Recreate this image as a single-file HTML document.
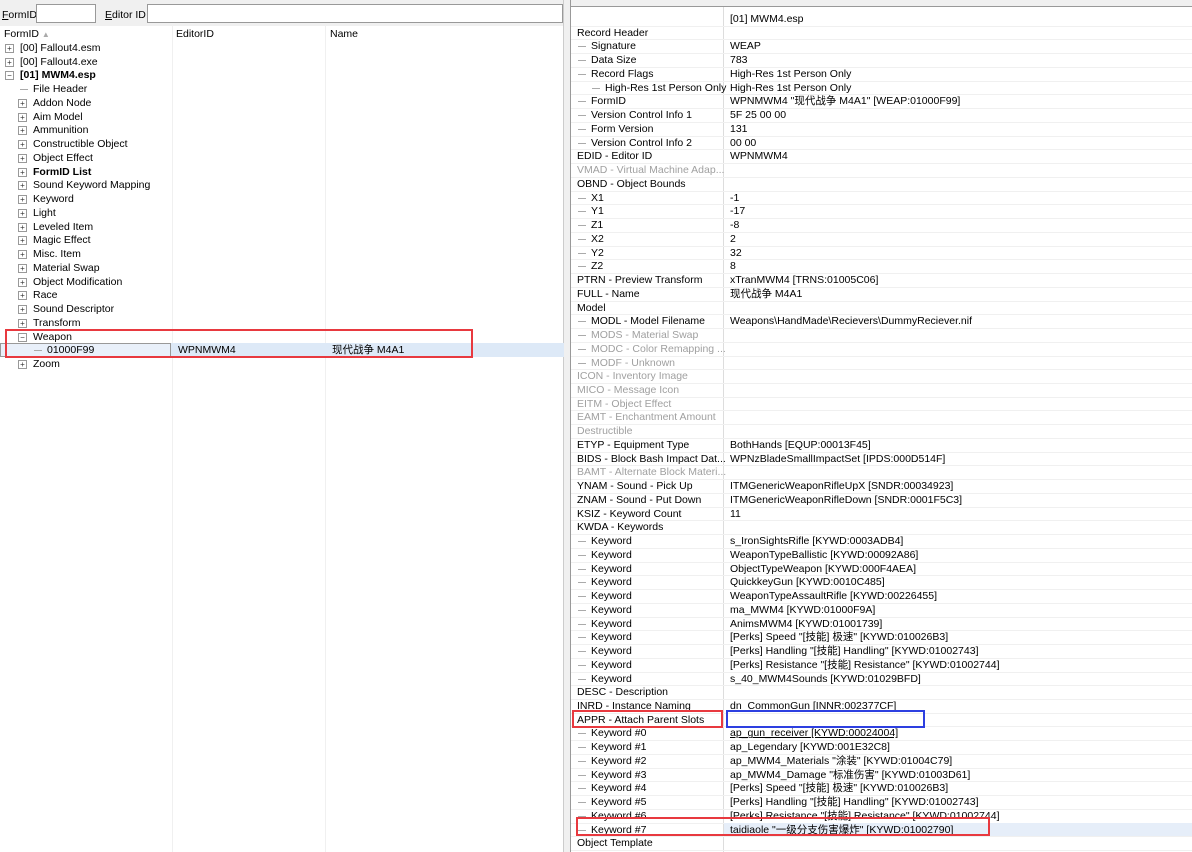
<!DOCTYPE html><html><head><meta charset="utf-8"><style>
*{margin:0;padding:0;box-sizing:border-box}
body{width:1192px;height:852px;background:#fff;font-family:"Liberation Sans","Noto Sans CJK SC",sans-serif;font-size:10.5px;color:#000;position:relative;overflow:hidden}
.a{position:absolute;white-space:nowrap}
.r{position:absolute;height:13.74px;line-height:13.74px;white-space:nowrap;padding-top:2px}
.g{color:#a0a0a0}
.pl{position:absolute;width:9px;height:9px;border:1px solid #999;font-size:8px;line-height:7px;text-align:center;color:#333;background:#fff}
.tk{position:absolute;width:8px;border-top:1px solid #aaa}
</style></head><body>
<div class="a" style="left:0;top:0;width:566px;height:26px;background:#f0f0f0"></div>
<div class="a" style="left:2px;top:9px"><u>F</u>ormID</div>
<div class="a" style="left:36px;top:4px;width:60px;height:19px;border:1px solid #999;background:#fff"></div>
<div class="a" style="left:105px;top:9px"><u>E</u>ditor ID</div>
<div class="a" style="left:147px;top:4px;width:416px;height:19px;border:1px solid #999;background:#fff"></div>
<div class="a" style="left:0;top:26px;width:564px;height:14px;background:#fff"></div>
<div class="a" style="left:4px;top:28px">FormID <span style="color:#aaa;font-size:8px">▲</span></div>
<div class="a" style="left:176px;top:28px">EditorID</div>
<div class="a" style="left:330px;top:28px">Name</div>
<div class="a" style="left:172px;top:26px;height:826px;border-left:1px solid #f0f0f0"></div>
<div class="a" style="left:325px;top:26px;height:826px;border-left:1px solid #f0f0f0"></div>
<div class="a" style="left:563px;top:0;width:8px;height:852px;background:#f0f0f0;border-left:1px solid #ccc;border-right:1px solid #999"></div>
<div id="L"></div>
<div class="a" style="left:571px;top:0;width:621px;height:6px;background:#f0f0f0"></div>
<div class="a" style="left:571px;top:6px;width:621px;height:846px;border-top:1px solid #999"></div>
<div class="a" style="left:723px;top:7px;height:845px;border-left:1px solid #ddd"></div>
<div id="R"></div>
<div class="a" style="left:5px;top:329px;width:468px;height:29px;border:2px solid #e8393f"></div>
<div class="a" style="left:572px;top:710px;width:151px;height:18px;border:2px solid #e8393f"></div>
<div class="a" style="left:726px;top:710px;width:199px;height:18px;border:2px solid #2d3fe0"></div>
<div class="a" style="left:576px;top:817px;width:414px;height:19px;border:2px solid #e8393f"></div>
<script>
var L=[["[00] Fallout4.esm",0,1],["[00] Fallout4.exe",0,1],["<b>[01] MWM4.esp</b>",0,2],["File Header",1,0],["Addon Node",1,1],["Aim Model",1,1],["Ammunition",1,1],["Constructible Object",1,1],["Object Effect",1,1],["<b>FormID List</b>",1,1],["Sound Keyword Mapping",1,1],["Keyword",1,1],["Light",1,1],["Leveled Item",1,1],["Magic Effect",1,1],["Misc. Item",1,1],["Material Swap",1,1],["Object Modification",1,1],["Race",1,1],["Sound Descriptor",1,1],["Transform",1,1],["Weapon",1,2],["01000F99",2,0],["Zoom",1,1]];
var h="",s=13.74;
L.forEach(function(e,i){var t=40+i*s;var x=e[1]==0?20:e[1]==1?33:47;
if(i==22){h+='<div class="a" style="left:0;top:'+(t+1)+'px;width:564px;height:14px;background:#dde9f7"></div><div class="a" style="left:0;top:'+(t+1)+'px;width:171px;height:14px;border:1px solid #999;background:#e9f0fa"></div>';h+='<div class="r" style="left:178px;top:'+t+'px">WPNMWM4</div><div class="r" style="left:332px;top:'+t+'px">现代战争 M4A1</div>';}
if(e[2])h+='<div class="pl" style="left:'+(x-15)+'px;top:'+(t+4)+'px">'+(e[2]==1?'+':'−')+'</div>';else h+='<div class="tk" style="left:'+(x-13)+'px;top:'+(t+8)+'px"></div>';
h+='<div class="r" style="left:'+x+'px;top:'+t+'px">'+e[0]+'</div>';});
document.getElementById('L').innerHTML=h;
var K=["s_IronSightsRifle [KYWD:0003ADB4]","WeaponTypeBallistic [KYWD:00092A86]","ObjectTypeWeapon [KYWD:000F4AEA]","QuickkeyGun [KYWD:0010C485]","WeaponTypeAssaultRifle [KYWD:00226455]","ma_MWM4 [KYWD:01000F9A]","AnimsMWM4 [KYWD:01001739]","[Perks] Speed \"[技能] 极速\" [KYWD:010026B3]","[Perks] Handling \"[技能] Handling\" [KYWD:01002743]","[Perks] Resistance \"[技能] Resistance\" [KYWD:01002744]","s_40_MWM4Sounds [KYWD:01029BFD]"];
var R=[["","[01] MWM4.esp",0],["Record Header","",0],["Signature","WEAP",1],["Data Size","783",1],["Record Flags","High-Res 1st Person Only",1],["High-Res 1st Person Only","High-Res 1st Person Only",2],["FormID","WPNMWM4 \"现代战争 M4A1\" [WEAP:01000F99]",1],["Version Control Info 1","5F 25 00 00",1],["Form Version","131",1],["Version Control Info 2","00 00",1],["EDID - Editor ID","WPNMWM4",0],["VMAD - Virtual Machine Adap...","",0,1],["OBND - Object Bounds","",0],["X1","-1",1],["Y1","-17",1],["Z1","-8",1],["X2","2",1],["Y2","32",1],["Z2","8",1],["PTRN - Preview Transform","xTranMWM4 [TRNS:01005C06]",0],["FULL - Name","现代战争 M4A1",0],["Model","",0],["MODL - Model Filename","Weapons\\HandMade\\Recievers\\DummyReciever.nif",1],["MODS - Material Swap","",1,1],["MODC - Color Remapping ...","",1,1],["MODF - Unknown","",1,1],["ICON - Inventory Image","",0,1],["MICO - Message Icon","",0,1],["EITM - Object Effect","",0,1],["EAMT - Enchantment Amount","",0,1],["Destructible","",0,1],["ETYP - Equipment Type","BothHands [EQUP:00013F45]",0],["BIDS - Block Bash Impact Dat...","WPNzBladeSmallImpactSet [IPDS:000D514F]",0],["BAMT - Alternate Block Materi...","",0,1],["YNAM - Sound - Pick Up","ITMGenericWeaponRifleUpX [SNDR:00034923]",0],["ZNAM - Sound - Put Down","ITMGenericWeaponRifleDown [SNDR:0001F5C3]",0],["KSIZ - Keyword Count","11",0],["KWDA - Keywords","",0]];
K.forEach(function(k){R.push(["Keyword",k,1])});
R.push(["DESC - Description","",0],["INRD - Instance Naming","dn_CommonGun [INNR:002377CF]",0],["APPR - Attach Parent Slots","",0]);
["ap_gun_receiver [KYWD:00024004]","ap_Legendary [KYWD:001E32C8]","ap_MWM4_Materials \"涂装\" [KYWD:01004C79]","ap_MWM4_Damage \"标准伤害\" [KYWD:01003D61]","[Perks] Speed \"[技能] 极速\" [KYWD:010026B3]","[Perks] Handling \"[技能] Handling\" [KYWD:01002743]","[Perks] Resistance \"[技能] Resistance\" [KYWD:01002744]","taidiaole \"一级分支伤害爆炸\" [KYWD:01002790]"].forEach(function(k,i){R.push(["Keyword #"+i,k,1])});
R.push(["Object Template","",0]);
h="";
R.forEach(function(e,i){var t=11+i*s;var x=e[2]==0?577:e[2]==1?591:605;
if(i==59)h+='<div class="a" style="left:724px;top:'+(t+1)+'px;width:468px;height:14px;background:#e6eef9"></div>';
h+='<div class="a" style="left:571px;top:'+(t+s+1)+'px;width:621px;border-top:1px solid #f0f0f0"></div>';
if(e[2])h+='<div class="tk" style="left:'+(x-13)+'px;top:'+(t+8)+'px"></div>';
h+='<div class="r'+(e[3]?' g':'')+'" style="left:'+x+'px;top:'+t+'px">'+e[0]+'</div>';
h+='<div class="r" style="left:730px;top:'+t+'px'+(i==52?';text-decoration:underline':'')+'">'+e[1]+'</div>';});
document.getElementById('R').innerHTML=h;
</script>
</body></html>
